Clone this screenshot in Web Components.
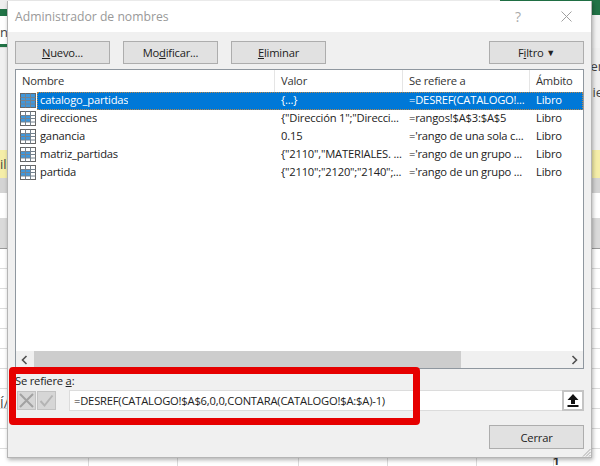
<!DOCTYPE html>
<html lang="es">
<head>
<meta charset="utf-8">
<title>Administrador de nombres</title>
<style>
  html, body { margin: 0; height: 100%; overflow: hidden; }
  body { font: 11.2px "Open Sans", "Liberation Sans", sans-serif; letter-spacing: -.2px; color: #222; }
</style>
</head>
<body>
<excel-sheet>
  <name-dialog title="Administrador de nombres">
    <div slot="actions">
      <dlg-button><u>N</u>uevo...</dlg-button>
      <dlg-button>Mo<u>d</u>ificar...</dlg-button>
      <dlg-button><u>E</u>liminar</dlg-button>
      <dlg-button slot-end>F<u>i</u>ltro <span style="font-size:9px">&#9660;</span></dlg-button>
    </div>
    <name-list slot="list">
      <name-row selected name="catalogo_partidas" value="{...}" ref="=DESREF(CATALOGO!..." scope="Libro"></name-row>
      <name-row name="direcciones" value="{&quot;Dirección 1&quot;;&quot;Direcci..." ref="=rangos!$A$3:$A$5" scope="Libro"></name-row>
      <name-row name="ganancia" value="0.15" ref="='rango de una sola c..." scope="Libro"></name-row>
      <name-row name="matriz_partidas" value="{&quot;2110&quot;,&quot;MATERIALES. ..." ref="='rango de un grupo ..." scope="Libro"></name-row>
      <name-row name="partida" value="{&quot;2110&quot;;&quot;2120&quot;;&quot;2140&quot;;..." ref="='rango de un grupo ..." scope="Libro"></name-row>
    </name-list>
    <ref-bar slot="ref" formula="=DESREF(CATALOGO!$A$6,0,0,CONTARA(CATALOGO!$A:$A)-1)"></ref-bar>
    <dlg-button slot="footer">Cerrar</dlg-button>
  </name-dialog>
</excel-sheet>

<script>
// backdrop: the excel window behind the dialog
let sheetTmpl = document.createElement('template');
sheetTmpl.innerHTML = `
<style>
  :host { display: block; position: relative; width: 600px; height: 466px; overflow: hidden; background: #fff; }
  .band { display: flex; justify-content: space-between; overflow: hidden; font-size: 13px; line-height: 1; color: #444; letter-spacing: 0; }
  .tabs { height: 48px; background: #f3f3f3; }
  .tabs .l { width: 100px; height: 48px; box-sizing: border-box; background: linear-gradient(#eee 9px, #217346 9px, #217346 16px, #fff 16px, #fff 44px, #217346 44px, #217346 47px, #ddd 47px); padding-top: 26px; }
  .tabs .r { width: 100px; height: 15px; background: #217346; }
  .tools { height: 102px; background: #f0f0f0; padding-top: 5px; box-sizing: border-box; justify-content: flex-end; }
  .tools span { margin-right: -3px; text-align: right; line-height: 26px; }
  .warn { height: 28px; background: #f5eea8; align-items: center; }
  .gap { height: 15px; background: #d4d4d4; }
  .white { height: 25px; background: #fff; }
  .head { height: 30px; background: #dadada; border-bottom: 1px solid #9a9a9a; }
  .cells { height: 217px; background:
    repeating-linear-gradient(#fff 0, #fff 19px, #dcdcdc 19px, #dcdcdc 20px);
    align-items: flex-start; font-size: 13px; padding-top: 148px; box-sizing: border-box; }
  .foot { position: absolute; left: 0; right: 0; bottom: 0; height: 8px; background:
    linear-gradient(#dcdcdc,#dcdcdc) 88px 0/1px 100% no-repeat,
    linear-gradient(#dcdcdc,#dcdcdc) 177px 0/1px 100% no-repeat,
    linear-gradient(#dcdcdc,#dcdcdc) 298px 0/1px 100% no-repeat,
    linear-gradient(#dcdcdc,#dcdcdc) 387px 0/1px 100% no-repeat,
    linear-gradient(#dcdcdc,#dcdcdc) 476px 0/1px 100% no-repeat,
    linear-gradient(#dcdcdc,#dcdcdc) 553px 0/1px 100% no-repeat; }
  .one { position: absolute; left: 553px; top: -5px; font-size: 11px; font-weight: 700; color: #333; }
</style>
<div class="band tabs"><div class="l">nu</div><div class="r"></div></div>
<div class="band tools"><span>er<br>ie</span></div>
<div class="band warn"><span>il</span><span></span></div>
<div class="band gap"></div>
<div class="band white"></div>
<div class="band head"></div>
<div class="band cells"><span>Í/</span></div>
<div class="foot"><span class="one">1</span></div>
<slot></slot>
`;

class ExcelSheet extends HTMLElement {
  constructor() {
    super();
    this.attachShadow({ mode: 'open' });
    this.shadowRoot.appendChild(sheetTmpl.content.cloneNode(true));
  }
}

let dialogTmpl = document.createElement('template');
dialogTmpl.innerHTML = `
<style>
  :host {
    position: absolute; left: 7px; top: 1px; width: 585px; height: 457px;
    display: flex; flex-direction: column; box-sizing: border-box;
    background: #f0f0f0; border: 1px solid #b5b5b5; border-top: 0;
    box-shadow: 1px 2px 4px rgba(0,0,0,.3);
  }
  .title { flex: 0 0 31px; background: #fff; display: flex; align-items: center; padding: 0 0 0 7px; letter-spacing: 0; }
  .title span { flex: 1; font-size: 12.2px; color: #999; }
  .title svg { display: block; }
  .title .q { font-size: 14px; color: #aaa; margin-right: 40px; flex: none; }
  .body { flex: 1; display: flex; flex-direction: column; padding: 9px 7px 0 7px; }
  ::slotted([slot=actions]) { display: flex; gap: 13px; height: 23px; }
  ::slotted([slot=list]) { margin-top: 5px; }
  ::slotted([slot=ref]) { margin-top: 4px; }
  .foot { display: flex; justify-content: flex-end; margin-top: 14px; }
  .grip { position: absolute; right: 0; bottom: 0; }
</style>
<div class="title">
  <span class="t"></span>
  <span class="q">?</span>
  <svg width="11" height="11" viewBox="0 0 11 11" style="margin-right:19px"><path d="M.5.5l10 10M10.5.5l-10 10" stroke="#a0a0a0" fill="none"/></svg>
</div>
<div class="body">
  <slot name="actions"></slot>
  <slot name="list"></slot>
  <slot name="ref"></slot>
  <div class="foot"><slot name="footer"></slot></div>
</div>
<svg class="grip" width="9" height="9" viewBox="0 0 9 9"><path d="M8.5 1L1 8.5M8.5 4L4 8.5M8.5 7L7 8.5" stroke="#a8a8a8" fill="none"/></svg>
<red-mark></red-mark>
`;

class NameDialog extends HTMLElement {
  constructor() {
    super();
    this.attachShadow({ mode: 'open' });
    const template = dialogTmpl.content.cloneNode(true);
    template.querySelector('.t').textContent = this.getAttribute('title');
    this.removeAttribute('title');
    this.shadowRoot.appendChild(template);
  }
  connectedCallback() {
    // the last action (Filtro) sits at the right end of the bar
    const last = this.querySelector('[slot-end]');
    if (last) last.style.marginLeft = 'auto';
  }
}

let buttonTmpl = document.createElement('template');
buttonTmpl.innerHTML = `
<style>
  :host {
    display: flex; align-items: center; justify-content: center; box-sizing: border-box;
    width: 95px; height: 23px; background: #e1e1e1; border: 1px solid #adadad;
    color: #222; white-space: pre;
  }
  :host([slot=footer]) { height: 24px; }
</style>
<slot></slot>
`;

class DlgButton extends HTMLElement {
  constructor() {
    super();
    this.attachShadow({ mode: 'open' });
    this.shadowRoot.appendChild(buttonTmpl.content.cloneNode(true));
  }
}

let listTmpl = document.createElement('template');
listTmpl.innerHTML = `
<style>
  :host {
    display: flex; flex-direction: column; box-sizing: border-box; height: 300px;
    background: #fff; border: 1px solid #8f979f;
  }
  .head { flex: 0 0 21px; display: grid; grid-template-columns: 259px 128px 127px 1fr; }
  .head span { border-right: 1px solid #e5e5e5; padding-left: 6px; line-height: 22px; color: #333; }
  .head span:last-child { border: 0; }
  .rows { flex: 1; }
  .bar { flex: 0 0 17px; display: flex; background: #f0f0f0; align-items: stretch; }
  .arrow { flex: 0 0 17px; display: flex; align-items: center; justify-content: center; }
  .thumb { flex: 0 0 427px; background: #cdcdcd; margin-left: 1px; }
  .track { flex: 1; }
</style>
<div class="head"><span>Nombre</span><span>Valor</span><span>Se refiere a</span><span>Ámbito</span></div>
<div class="rows"><slot></slot></div>
<div class="bar">
  <div class="arrow"><svg width="7" height="10" viewBox="0 0 7 10"><path d="M5.5 1L1.5 5l4 4" stroke="#505050" stroke-width="1.6" fill="none"/></svg></div>
  <div class="thumb"></div>
  <div class="track"></div>
  <div class="arrow"><svg width="7" height="10" viewBox="0 0 7 10"><path d="M1.5 1l4 4-4 4" stroke="#505050" stroke-width="1.6" fill="none"/></svg></div>
</div>
`;

class NameList extends HTMLElement {
  constructor() {
    super();
    this.attachShadow({ mode: 'open' });
    this.shadowRoot.appendChild(listTmpl.content.cloneNode(true));
  }
}

let rowTmpl = document.createElement('template');
rowTmpl.innerHTML = `
<style>
  :host { display: grid; grid-template-columns: 259px 128px 127px 1fr; height: 18px; line-height: 16px; color: #222; }
  :host([selected]) { color: #fff; background: linear-gradient(#0078d7,#0078d7) 21px 0 no-repeat; position: relative; }
  :host([selected])::before { content: ""; position: absolute; inset: 0 0 0 21px; border: 1px dotted #b9874a; }
  :host([selected]) svg { background: #3f97dc; }
  .name { display: flex; align-items: flex-start; gap: 4px; padding-left: 4px; }
  .name svg { flex: none; margin-top: 1px; }
  span { padding-left: 6px; white-space: nowrap; overflow: hidden; position: relative; }
  .name span { padding-left: 0; }
</style>
<div class="name">
  <svg width="16" height="15" viewBox="0 0 16 15">
    <rect x="1" y="4" width="9.5" height="7" fill="#3f97dc"/>
    <rect x=".5" y=".5" width="15" height="14" fill="none" stroke="#666"/>
    <path d="M.5 4.5h15M.5 7.5h15M.5 11h15M5.5 .5v14M10.5 .5v14" stroke="#75828e" fill="none"/>
  </svg>
  <span class="n"></span>
</div>
<span class="v"></span>
<span class="r"></span>
<span class="s"></span>
`;

class NameRow extends HTMLElement {
  constructor() {
    super();
    const template = rowTmpl.content.cloneNode(true);
    template.querySelector('.n').textContent = this.getAttribute('name');
    template.querySelector('.v').textContent = this.getAttribute('value');
    template.querySelector('.r').textContent = this.getAttribute('ref');
    template.querySelector('.s').textContent = this.getAttribute('scope');
    this.attachShadow({ mode: 'open' });
    this.shadowRoot.appendChild(template);
  }
}

let refTmpl = document.createElement('template');
refTmpl.innerHTML = `
<style>
  :host { display: block; }
  .lbl { line-height: 16px; height: 16px; color: #222; }
  .line { display: flex; align-items: stretch; height: 21px; margin-top: 1px; }
  .ico { width: 19px; height: 19px; margin: 1px 0 0 2px; box-sizing: border-box; background: #d6d6d6; border: 1px solid #c2c2c2; display: flex; align-items: center; justify-content: center; }
  .ico + .ico { margin-left: 1px; }
  .input { flex: 1; margin-left: 13px; background: #fff; border-top: 1px solid #dcdcdc; border-bottom: 1px solid #dcdcdc; border-left: 1px solid #dcdcdc; padding-left: 4px; line-height: 19px; color: #222; white-space: nowrap; }
  .up { width: 22px; box-sizing: border-box; background: #fff; border: 2px solid #c4c4c4; display: flex; align-items: center; justify-content: center; }
</style>
<div class="lbl">Se refiere <u>a</u>:</div>
<div class="line">
  <div class="ico"><svg width="15" height="15" viewBox="0 0 15 15"><path d="M1 1l13 13M14 1L1 14" stroke="#a2a2a2" stroke-width="2" fill="none"/></svg></div>
  <div class="ico"><svg width="15" height="15" viewBox="0 0 15 15"><path d="M1.5 8l4 4.5 8-10" stroke="#b4b4b4" stroke-width="2" fill="none"/></svg></div>
  <div class="input"></div>
  <div class="up"><svg width="12" height="13" viewBox="0 0 12 13"><path d="M6 0L11.5 6H8v4H4V6H.5zM0.5 11h11v2H.5z" fill="#111"/></svg></div>
</div>
`;

class RefBar extends HTMLElement {
  constructor() {
    super();
    const template = refTmpl.content.cloneNode(true);
    template.querySelector('.input').textContent = this.getAttribute('formula');
    this.attachShadow({ mode: 'open' });
    this.shadowRoot.appendChild(template);
  }
}

// red highlight someone drew over the screenshot
let markTmpl = document.createElement('template');
markTmpl.innerHTML = `
<style>
  :host { position: absolute; left: 1px; top: 366px; width: 411px; height: 58px; box-sizing: border-box; border: 7px solid #e60000; border-radius: 4px; pointer-events: none; }
</style>
`;

class RedMark extends HTMLElement {
  constructor() {
    super();
    this.attachShadow({ mode: 'open' });
    this.shadowRoot.appendChild(markTmpl.content.cloneNode(true));
  }
}

customElements.define('excel-sheet', ExcelSheet);
customElements.define('name-dialog', NameDialog);
customElements.define('dlg-button', DlgButton);
customElements.define('name-list', NameList);
customElements.define('name-row', NameRow);
customElements.define('ref-bar', RefBar);
customElements.define('red-mark', RedMark);
</script>
</body>
</html>
